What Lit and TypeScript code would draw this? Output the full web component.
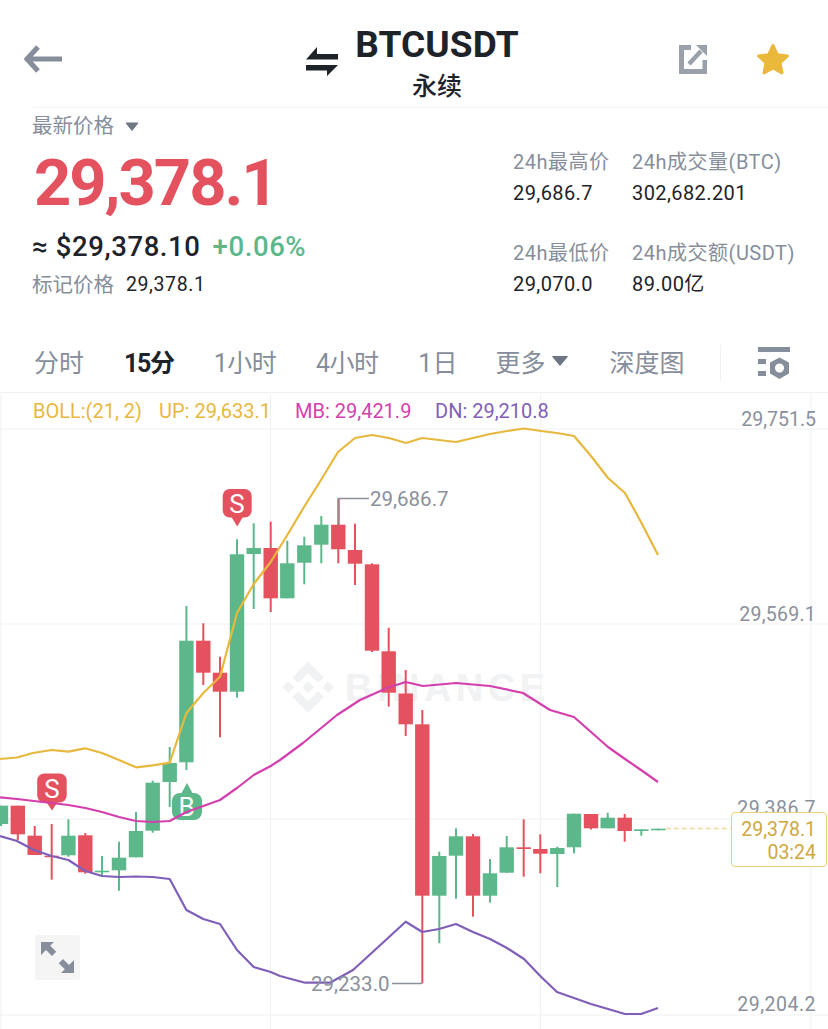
import { LitElement, html, css, svg } from "lit";
import { customElement } from "lit/decorators.js";

type Candle = [number, "g" | "r", number, number, number, number];
// x, colour, body top, body bottom, wick top, wick bottom (page coordinates)
const CANDLES: Candle[] = [
  [1, "g", 805.7, 824, 805.7, 826],
  [17.8, "r", 805.7, 834.3, 805.7, 840],
  [34.7, "r", 835.7, 855, 826, 855],
  [51.7, "r", 855.7, 857.2, 824, 879.7],
  [68.4, "g", 835.7, 855.3, 819.3, 856.7],
  [85.3, "r", 835.3, 872.3, 833, 873.7],
  [102, "g", 870.7, 872.3, 856, 876],
  [119, "g", 857.7, 870.3, 841.7, 890.7],
  [136, "g", 831, 857.3, 812, 857.3],
  [152.7, "g", 782.7, 830.7, 780.7, 832.7],
  [169.7, "g", 763, 782, 747, 807],
  [186.4, "g", 640.7, 762.3, 606, 770],
  [203.3, "r", 640.7, 672.7, 623.3, 685],
  [220, "r", 672.7, 691.7, 656.7, 737.3],
  [237, "g", 554.3, 691.7, 539.3, 697.7],
  [253.7, "g", 548, 554, 523.3, 609],
  [270.7, "r", 548, 598.3, 521.7, 612],
  [287.3, "g", 563.3, 598.3, 540.7, 598.3],
  [304.3, "g", 545.3, 562.7, 536.7, 584.3],
  [321.3, "g", 524.7, 544.7, 516, 563.3],
  [338.3, "r", 524.7, 549.3, 498.3, 563.3],
  [355, "r", 550, 563.7, 523.7, 585],
  [372, "r", 564.3, 650.7, 563.3, 652],
  [388.7, "r", 651.3, 692.7, 627.7, 706.7],
  [405.7, "r", 693.5, 724.3, 670, 736],
  [422.3, "r", 724.3, 895.7, 710, 983.3],
  [439.3, "g", 856, 895.7, 851.7, 943.3],
  [456, "g", 836.3, 855.7, 828.3, 898.7],
  [473, "r", 836.3, 895.7, 834, 916.7],
  [490, "g", 873.3, 895.7, 859, 902.7],
  [506.7, "g", 847.3, 872.7, 836, 872.7],
  [523.7, "r", 847.3, 849, 819.3, 876.7],
  [540.3, "r", 849, 853.7, 834.3, 873.3],
  [557.3, "g", 848, 854, 846.7, 887],
  [574, "g", 813.7, 847.3, 813.7, 853.3],
  [591, "r", 814, 828.3, 814, 829.5],
  [607.7, "g", 817.7, 828.3, 812.7, 828.3],
  [624.7, "r", 817.7, 831, 814, 841.7],
  [641.3, "g", 829.3, 831, 829.3, 835.7],
  [658.3, "g", 828.7, 830.3, 828.7, 830.3],
];

const UP = "0,759 17,757.5 33,753 51.7,750 68.4,751.7 85,748.3 102,753 119,760 136,767.3 152.7,765.3 169.7,762.7 186.4,713 203.3,693 220,676.7 237,613 253.7,584 270.7,562 287.3,535 304,507 321,480 338,452 355,438 372,435 389,438 406,443 422,438 439,440 456,442 473,438 490,434 507,431 524,428.5 541,431 557,433 574,436 591,456 608,478 625,493 641,522 658,555";
const MB = "0,797.3 17,799 34,801 51.7,803 68.4,805 85.3,808 102,812 119,817 136,821 152.7,822 169.7,821 186.4,812 203.3,806 220,800 237,788 253.7,775 270.7,766 280,760 303,743 337,715 360,700 387,688 405.7,682 423,686 456,683 490,686 523,693 550,710 574,717 591,732 608,747 625,759 641,770 658,782";
const DN = "0,836 17,841 34,850 51.7,856 68.4,860 85.3,871 102,876 119,877 136,876.5 152.7,877 169.7,879 186.4,910 203.3,919 220,924 237,950 253.7,967 270.7,972 280,976 305,982.7 330,982.7 353,970 373,951.7 405.7,921.7 422.3,932 439,929 456,924 473,932 490,939 507,948 524,959 541,976.7 557,992 574,998 591,1004 608,1009 625,1014 641,1014 658,1008";

const LOGO = "M38.73 53.2l24.59-24.58 24.6 24.6 14.3-14.31L63.32 0 24.42 38.9l14.31 14.31zM0 63.31l14.3-14.31 14.31 14.31-14.31 14.3zM38.73 73.41l24.59 24.59 24.6-24.6 14.31 14.29-38.9 38.91-38.91-38.88-.02-.02 14.33-14.29zM98.28 63.31l14.3-14.3 14.32 14.29-14.31 14.32zM77.83 63.3L63.32 48.78 52.59 59.51l-1.24 1.23-2.54 2.54 14.51 14.5 14.51-14.47z";

function downBadge(x: number, y: number, w: number, h: number, tail: number, fill: string) {
  const c = x + w / 2;
  return svg`<rect x=${x} y=${y} width=${w} height=${h} rx="7" fill=${fill}></rect>
    <polygon points="${c - 6},${y + h - 1} ${c + 6},${y + h - 1} ${c},${y + h + tail}" fill=${fill}></polygon>`;
}

function upBadge(x: number, y: number, w: number, h: number, tail: number, fill: string) {
  const c = x + w / 2;
  return svg`<rect x=${x} y=${y} width=${w} height=${h} rx="8" fill=${fill}></rect>
    <polygon points="${c - 6},${y + 1} ${c + 6},${y + 1} ${c},${y - tail}" fill=${fill}></polygon>`;
}

@customElement("app-root")
export class AppRoot extends LitElement {
  static styles = css`
    :host {
      display: block;
      width: 828px;
      height: 1029px;
      overflow: hidden;
      background: #fff;
      font-family: Roboto, "Noto Sans CJK SC", sans-serif;
      color: #1e2329;
    }
    .header {
      height: 107px;
      display: grid;
      grid-template-columns: 1fr auto 1fr;
      box-sizing: border-box;
      padding: 32px 38px 0 24px;
    }
    .header svg { display: block; }
    .center { display: flex; gap: 17px; margin-left: 11px; }
    .swap { margin-top: 15px; }
    .title-col { display: flex; flex-direction: column; align-items: center; }
    .title { font-size: 37px; line-height: 26px; font-weight: 700; letter-spacing: 0.1px; }
    .sub { font-size: 25px; line-height: 30px; margin-top: 14px; font-weight: 500; }
    .actions { display: flex; justify-content: flex-end; gap: 49px; margin-top: 13px; align-items: flex-start; }
    .rule { height: 1px; background: #f1f1f2; margin-left: 33px; }
    .summary {
      height: 227px;
      display: flex;
      justify-content: space-between;
      box-sizing: border-box;
    }
    .left { padding-left: 32px; }
    .label { color: #868e9b; font-size: 20.5px; line-height: 24px; }
    .last { display: flex; align-items: center; gap: 11px; margin-top: 6px; }
    .caret { display: block; }
    .price {
      color: #e5525f;
      font-size: 65px;
      line-height: 54px;
      font-weight: 700;
      letter-spacing: -2px;
      margin-top: 18px;
      margin-left: 2px;
    }
    .usd { display: flex; font-size: 27.5px; line-height: 30px; font-weight: 500; gap: 12px; margin-top: 22px; letter-spacing: 0.6px; }
    .usd .up { color: #5cb88a; }
    .mark { display: flex; align-items: center; gap: 12px; margin-top: 11px; }
    .mark .val { font-size: 19.5px; letter-spacing: 0.6px; margin-top: 0; }
    .right {
      display: grid;
      grid-template-columns: 96px auto;
      column-gap: 23px;
      row-gap: 0;
      align-content: start;
      margin-right: 33px;
      padding-top: 42px;
    }
    .cell { height: 91px; }
    .cell .label { font-size: 20px; white-space: nowrap; letter-spacing: 0.5px; }
    .val { font-size: 20px; line-height: 24px; margin-top: 7px; white-space: nowrap; letter-spacing: 0.4px; }
    .tabs {
      height: 58px;
      display: flex;
      align-items: center;
      gap: 40px;
      padding: 0 0 6px 34px;
      box-sizing: border-box;
      border-bottom: 1px solid #f1f1f2;
      font-size: 25px;
      color: #868e9b;
      white-space: nowrap;
    }
    .tab.on { color: #1e2329; font-weight: 700; letter-spacing: -1.3px; }
    .tab.tight { letter-spacing: -0.6px; }
    .more { display: flex; align-items: center; gap: 6px; margin-left: -2px; }
    .tail { display: flex; align-items: center; height: 36px; margin: 4px 0 0 -4px; padding-left: 37px; border-left: 1px solid #f1f1f2; }
    .chart { position: relative; height: 636px; }
    .chart svg { position: absolute; left: 0; top: 0; display: block; }
    .stamp {
      position: absolute;
      left: 731px;
      top: 419px;
      width: 96px;
      height: 55px;
      box-sizing: border-box;
      border: 1.5px solid #ecd075;
      border-radius: 4px;
      background: #fff;
      color: #cfa83e;
      font-size: 19.5px;
      line-height: 23px;
      text-align: right;
      padding: 5px 10px 0 0;
    }
  `;

  render() {
    return html`
      <div class="header">
        <svg width="38" height="28" viewBox="0 0 38 28" style="margin-top:13px">
          <path d="M14 2 3 14l11 12M3 14h35" fill="none" stroke="#868e9b" stroke-width="5"></path>
        </svg>
        <div class="center">
          <svg class="swap" width="32" height="29" viewBox="0 0 32 29">
            <path d="M0 12.5 11 0v7h21v5.5zM0 18h32L21 29v-5.5H0z" fill="#1e2329"></path>
          </svg>
          <div class="title-col">
            <div class="title">BTCUSDT</div>
            <div class="sub">永续</div>
          </div>
        </div>
        <div class="actions">
          <svg width="28" height="29" viewBox="0 0 28 29">
            <path d="M12 2.5H2.5v24H26V15" fill="none" stroke="#9aa1ab" stroke-width="5"></path>
            <path d="M10 19 22 6" fill="none" stroke="#9aa1ab" stroke-width="4.5"></path>
            <path d="M17 0h11v11z" fill="#9aa1ab"></path>
          </svg>
          <svg width="34" height="32" viewBox="0 0 34 32" style="margin-top:-2px">
            <path d="M17 2.5l4.3 9.2 10.2 1.2-7.5 7 2 10L17 25l-9 4.9 2-10-7.5-7 10.2-1.2z" fill="#eab93b" stroke="#eab93b" stroke-width="3" stroke-linejoin="round"></path>
          </svg>
        </div>
      </div>
      <div class="rule"></div>
      <div class="summary">
        <div class="left">
          <div class="last">
            <span class="label">最新价格</span>
            <svg class="caret" width="14" height="9" viewBox="0 0 14 9"><path d="M1 1h12L7 8.5z" fill="#6f7785" stroke="#6f7785" stroke-linejoin="round"></path></svg>
          </div>
          <div class="price">29,378.1</div>
          <div class="usd"><span>≈ $29,378.10</span><span class="up">+0.06%</span></div>
          <div class="mark"><span class="label">标记价格</span><span class="val">29,378.1</span></div>
        </div>
        <div class="right">
          <div class="cell"><div class="label">24h最高价</div><div class="val">29,686.7</div></div>
          <div class="cell"><div class="label">24h成交量(BTC)</div><div class="val">302,682.201</div></div>
          <div class="cell"><div class="label">24h最低价</div><div class="val">29,070.0</div></div>
          <div class="cell"><div class="label">24h成交额(USDT)</div><div class="val">89.00亿</div></div>
        </div>
      </div>
      <div class="tabs">
        <span class="tab">分时</span>
        <span class="tab on">15分</span>
        <span class="tab tight">1小时</span>
        <span class="tab tight">4小时</span>
        <span class="tab">1日</span>
        <span class="tab more">更多
          <svg width="18" height="12" viewBox="0 0 18 12"><path d="M1.5 1.5h15L9 10.5z" fill="#6f7785" stroke="#6f7785" stroke-linejoin="round"></path></svg>
        </span>
        <span class="tab">深度图</span>
        <span class="tail">
          <svg width="32" height="32" viewBox="0 0 32 32">
            <path d="M0 0h32v5H0zM0 12h8v5H0zM0 24h8v5H0z" fill="#868e9b"></path>
            <path fill-rule="evenodd" d="M21.5 10.5 31 15.5v11l-9.500 5.500-9.500-5.500v-11zM21.500 16.500a4.500 4.500 0 1 0 .01 0z" fill="#868e9b"></path>
          </svg>
        </span>
      </div>
      <div class="chart">
        ${this.renderChart()}
        <div class="stamp">29,378.1<br />03:24</div>
      </div>
    `;
  }

  renderChart() {
    const axis = "Roboto, sans-serif";
    return svg`<svg width="828" height="636" viewBox="0 393 828 636">
      ${[1, 270.5, 540.5, 811].map((x) => svg`<line x1=${x} x2=${x} y1="394" y2="1029" stroke="#f0f1f3" stroke-width="1"></line>`)}
      ${[429, 624, 819, 1015].map((y) => svg`<line x1="0" x2="828" y1=${y} y2=${y} stroke="#f0f1f3" stroke-width="1"></line>`)}
      <g fill="#f0f2f3">
        <path transform="translate(282.5 661.500) scale(0.405)" d=${LOGO}></path>
        <text x="345" y="701" font-family="Liberation Sans, sans-serif" font-weight="700" font-size="38" textLength="200">BINANCE</text>
      </g>
      <g font-family=${axis} font-size="19.500" fill="#8a909c" text-anchor="end">
        <text x="816" y="426">29,751.5</text>
        <text x="816" y="621" letter-spacing="0.25">29,569.1</text>
        <text x="816" y="815" letter-spacing="0.5">29,386.7</text>
        <text x="816" y="1011" letter-spacing="0.5">29,204.2</text>
      </g>
      ${CANDLES.map(([x, c, t, b, wt, wb]) => {
        const col = c === "g" ? "#5cb88a" : "#e5525f";
        return svg`<rect x=${x - 1} y=${wt} width="2" height=${wb - wt} fill=${col}></rect>
          <rect x=${x - 7.2} y=${t} width="14.400" height=${b - t} fill=${col}></rect>`;
      })}
      ${upBadge(172, 793, 30, 27, 10, "#5cb88a")}
      <text x="186.500" y="816" font-family=${axis} font-size="26" fill="#fff" text-anchor="middle">B</text>
      ${downBadge(222.7, 489, 29, 28.5, 9, "#e5525f")}
      <text x="237" y="512.500" font-family=${axis} font-size="26" fill="#fff" text-anchor="middle">S</text>
      ${downBadge(37.2, 773.5, 29.5, 29, 8, "#e5525f")}
      <text x="52" y="797.500" font-family=${axis} font-size="26" fill="#fff" text-anchor="middle">S</text>
      <polyline points=${UP} fill="none" stroke="#e8b83e" stroke-width="2.200" stroke-linejoin="round"></polyline>
      <polyline points=${MB} fill="none" stroke="#d43fae" stroke-width="2.200" stroke-linejoin="round"></polyline>
      <polyline points=${DN} fill="none" stroke="#7f5fb8" stroke-width="2.200" stroke-linejoin="round"></polyline>
      <path d="M339 525v-26.500h30M392 983.500h30" fill="none" stroke="#8a909c" stroke-width="1.500"></path>
      <g font-family=${axis} font-size="20.500" fill="#8a909c">
        <text x="370" y="506">29,686.7</text>
        <text x="311" y="991">29,233.0</text>
      </g>
      <line x1="666" x2="731" y1="828.500" y2="828.500" stroke="#f3dca0" stroke-width="1.500" stroke-dasharray="5 3"></line>
      <rect x="35" y="935" width="45" height="45" rx="3" fill="#f5f5f6"></rect>
      <g fill="#868e9b">
        <path d="M41 942h13l-3.800 3.800 6 6-4.200 4.200-6-6L41 955z"></path>
        <path d="M74 973H61l3.800-3.800-6-6 4.200-4.200 6 6L74 960z"></path>
      </g>
      <g font-family=${axis} font-size="20">
        <text x="33" y="418" fill="#e8b83e">BOLL:(21, 2)</text>
        <text x="159" y="418" fill="#e8b83e">UP: 29,633.1</text>
        <text x="295" y="418" fill="#d43fae">MB: 29,421.9</text>
        <text x="435" y="418" fill="#7f5fb8">DN: 29,210.8</text>
      </g>
    </svg>`;
  }
}
